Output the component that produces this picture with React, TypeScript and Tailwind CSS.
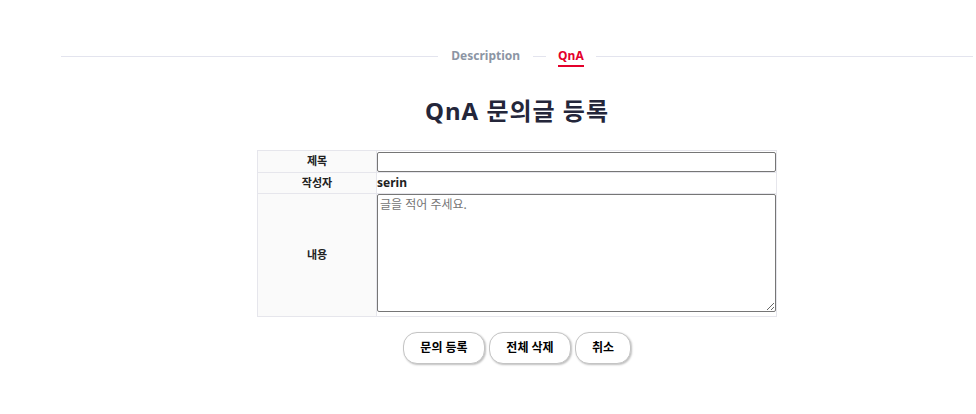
import React from 'react';

const sans = { fontFamily: '"Noto Sans", "Noto Sans CJK KR", sans-serif' };

export default function App() {
  return (
    <div className="w-[976px] h-[414px] bg-white" style={sans}>
      <div className="ml-[61px] w-[912px] pt-[46px]">
        {/* Tabs */}
        <div className="flex items-center h-[20px]">
          <div className="flex-1 h-px bg-[#e3e4ee]" />
          <div className="px-[13px] text-[12px] font-bold text-[#8c95a4] leading-[20px]">Description</div>
          <div className="w-[13px] h-px bg-[#e3e4ee]" />
          <div className="relative px-[12px] text-[12px] font-bold text-[#e4002b] leading-[20px]">
            QnA
            <div className="absolute left-[12px] right-[12px] -bottom-[1px] h-[2px] bg-[#e4002b]" />
          </div>
          <div className="flex-1 h-px bg-[#e3e4ee]" />
        </div>

        {/* Title */}
        <h1 className="mt-[26px] text-center text-[24px] font-bold tracking-[1px] text-[#24263a] leading-[38px]">QnA 문의글 등록</h1>

        {/* Form */}
        <div className="mt-[20px] flex justify-center">
          <table className="w-[520px] border-collapse text-[11px] text-[#222]">
            <tbody>
              <tr className="h-[22px]">
                <th className="w-[120px] border border-[#e6e6ec] bg-[#fafafa] font-semibold">제목</th>
                <td className="border border-[#e6e6ec] p-0 align-top">
                  <input className="block w-[399px] h-[20px] mt-px border border-[#767676] rounded-[2px] outline-none px-1 text-[12px]" />
                </td>
              </tr>
              <tr className="h-[21px]">
                <th className="border border-[#e6e6ec] bg-[#fafafa] font-semibold">작성자</th>
                <td className="border border-[#e6e6ec] p-0 text-[12px] font-bold">serin</td>
              </tr>
              <tr className="h-[122px]">
                <th className="border border-[#e6e6ec] bg-[#fafafa] font-semibold">내용</th>
                <td className="border border-[#e6e6ec] p-0 pb-[4px] align-top">
                  <textarea
                    placeholder="글을 적어 주세요."
                    className="block w-[399px] h-[118px] border border-[#767676] rounded-[2px] outline-none px-[2px] py-px text-[12px] placeholder:text-[#757575]"
                  />
                </td>
              </tr>
            </tbody>
          </table>
        </div>

        {/* Buttons */}
        <div className="mt-[15px] flex justify-center gap-[4px]">
          <button className="w-[82px] h-[32px] rounded-[14px] border border-[#c4c4c4] bg-white text-[12px] font-bold text-black shadow-[1px_1px_2px_rgba(0,0,0,0.25)]">문의 등록</button>
          <button className="w-[82px] h-[32px] rounded-[14px] border border-[#c4c4c4] bg-white text-[12px] font-bold text-black shadow-[1px_1px_2px_rgba(0,0,0,0.25)]">전체 삭제</button>
          <button className="w-[56px] h-[32px] rounded-[14px] border border-[#c4c4c4] bg-white text-[12px] font-bold text-black shadow-[1px_1px_2px_rgba(0,0,0,0.25)]">취소</button>
        </div>
      </div>
    </div>
  );
}
